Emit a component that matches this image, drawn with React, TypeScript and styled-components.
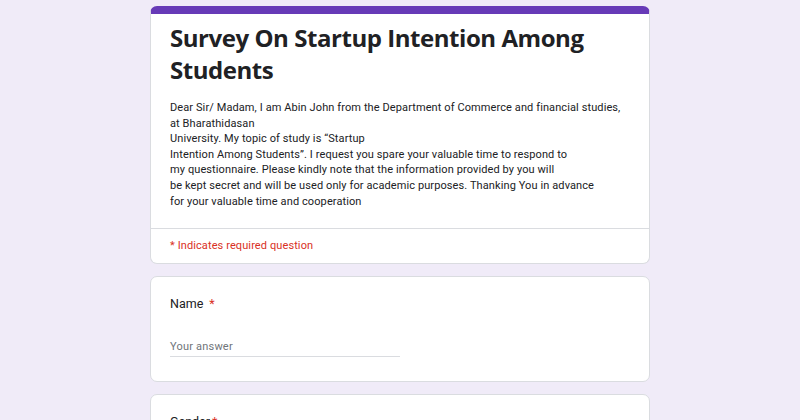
import React from "react";
import styled, { createGlobalStyle } from "styled-components";

const Global = createGlobalStyle`
  html, body { margin: 0; padding: 0; background: #f0ebf8; }
  body { font-family: Roboto, "Liberation Sans", Arial, sans-serif; color: #202124; }
`;

const Page = styled.div`
  display: flex;
  flex-direction: column;
  align-items: center;
  gap: 12px;
  padding-top: 6px;
  min-height: 420px;
`;

const Card = styled.section`
  box-sizing: border-box;
  width: 500px;
  background: #fff;
  border: 1px solid #dadce0;
  border-radius: 7px;
  overflow: hidden;
`;

const HeaderCard = styled(Card)`
  border-top: 8px solid #673ab7;
`;

const HeaderBody = styled.div`
  padding: 8px 19px 19px;
`;

const Title = styled.h1`
  margin: 0;
  font-family: "Open Sans", sans-serif;
  font-weight: 700;
  font-size: 24px;
  line-height: 32px;
  letter-spacing: -0.45px;
  color: #202124;
`;

const Description = styled.p`
  margin: 14px 0 0;
  font-size: 11px;
  line-height: 15.6px;
  letter-spacing: 0.1px;
  color: #202124;
  white-space: pre-line;
`;

const Divider = styled.div`
  height: 1px;
  background: #dadce0;
`;

const Required = styled.div`
  padding: 9px 19px 9px;
  font-size: 11px;
  line-height: 16px;
  letter-spacing: 0.1px;
  color: #d93025;
`;

const QuestionBody = styled.div`
  padding: 18px 19px 24px;
`;

const Label = styled.div`
  font-size: 12.5px;
  line-height: 18px;
  color: #202124;
`;

const Star = styled.span<{ $gap?: number }>`
  color: #d93025;
  margin-left: ${(p) => p.$gap ?? 6}px;
`;

const Answer = styled.div`
  margin-top: 26px;
  width: 230px;
  padding-bottom: 1px;
  border-bottom: 1px solid #dadce0;
  font-size: 11px;
  line-height: 16px;
  color: #70757a;
  letter-spacing: 0.2px;
`;

const description = `Dear Sir/ Madam, I am Abin John from the Department of Commerce and financial studies,
at Bharathidasan
University. My topic of study is “Startup
Intention Among Students”. I request you spare your valuable time to respond to
my questionnaire. Please kindly note that the information provided by you will
be kept secret and will be used only for academic purposes. Thanking You in advance
for your valuable time and cooperation`;

export default function App() {
  return (
    <>
      <Global />
      <Page>
        <HeaderCard>
          <HeaderBody>
            <Title>Survey On Startup Intention Among Students</Title>
            <Description>{description}</Description>
          </HeaderBody>
          <Divider />
          <Required>* Indicates required question</Required>
        </HeaderCard>
        <Card>
          <QuestionBody>
            <Label>
              Name<Star>*</Star>
            </Label>
            <Answer>Your answer</Answer>
          </QuestionBody>
        </Card>
        <Card>
          <QuestionBody>
            <Label>
              Gender<Star $gap={2}>*</Star>
            </Label>
            <Answer>Your answer</Answer>
          </QuestionBody>
        </Card>
      </Page>
    </>
  );
}
